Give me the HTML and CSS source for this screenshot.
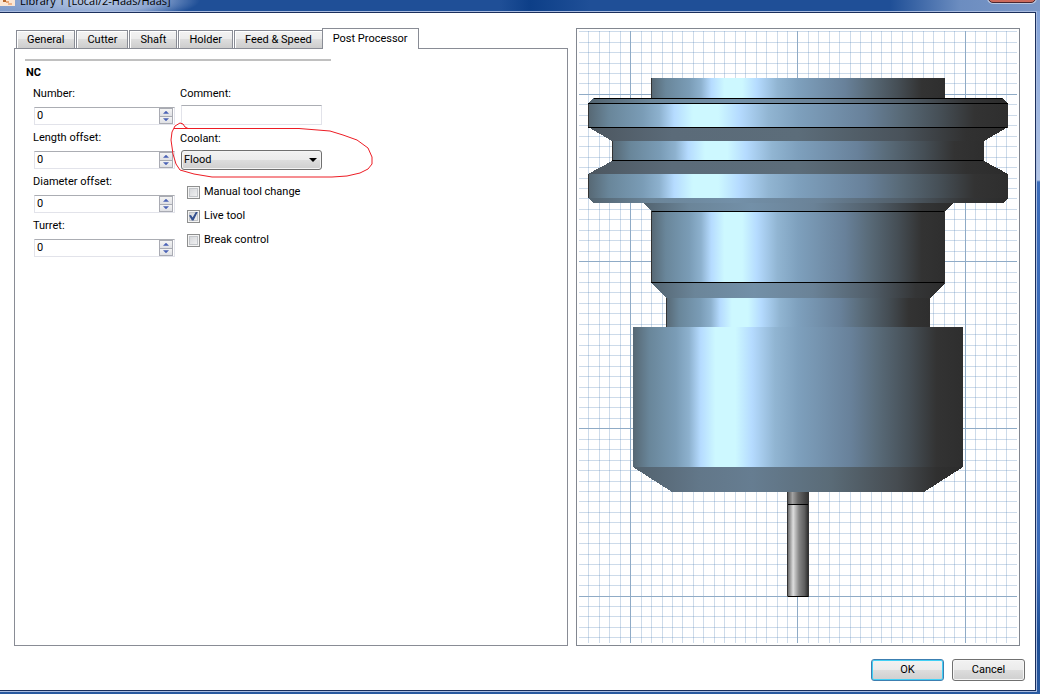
FILE: index.html
```html
<!DOCTYPE html>
<html lang="en">
<head>
  <meta charset="UTF-8" />
  <meta name="viewport" content="width=device-width, initial-scale=1.0" />
  <title>Library</title>
  <link rel="stylesheet" href="styles.css">
</head>
<body>
  <header class="titlebar">
    <svg class="app-icon" width="15" height="15" viewBox="0 0 15 15" aria-hidden="true">
      <rect width="15" height="15" fill="#fbe6d4"/>
      <path d="M3 7h3v4H3z" fill="#b5662c"/>
      <path d="M6 10h3v2H6z" fill="#e8a878"/>
      <path d="M8 12h4v2H8z" fill="#eeb58c"/>
      <path d="M10 7h3v2h-3z" fill="#fff"/>
    </svg>
    <span class="title">Library 1 [Local/2-Haas/Haas]</span>
    <button class="close" aria-label="Close"></button>
  </header>

  <div class="window">
    <main class="content">
      <section class="editor">
        <div class="tabs" role="tablist">
          <button class="tab" role="tab">General</button>
          <button class="tab" role="tab">Cutter</button>
          <button class="tab" role="tab">Shaft</button>
          <button class="tab" role="tab">Holder</button>
          <button class="tab" role="tab">Feed &amp; Speed</button>
          <button class="tab active" role="tab" aria-selected="true">Post Processor</button>
        </div>

        <div class="panel" role="tabpanel">
          <hr class="rule">
          <h2>NC</h2>
          <form class="fields">
            <div class="col col-numbers">
              <div class="field">
                <label for="number">Number:</label>
                <div class="spinner">
                  <input type="number" id="number" value="0">
                  <div class="arrows">
                    <button type="button" class="up" aria-label="Increase number"></button>
                    <button type="button" class="down" aria-label="Decrease number"></button>
                  </div>
                </div>
              </div>
              <div class="field">
                <label for="lengthOffset">Length offset:</label>
                <div class="spinner">
                  <input type="number" id="lengthOffset" value="0">
                  <div class="arrows">
                    <button type="button" class="up" aria-label="Increase length offset"></button>
                    <button type="button" class="down" aria-label="Decrease length offset"></button>
                  </div>
                </div>
              </div>
              <div class="field">
                <label for="diameterOffset">Diameter offset:</label>
                <div class="spinner">
                  <input type="number" id="diameterOffset" value="0">
                  <div class="arrows">
                    <button type="button" class="up" aria-label="Increase diameter offset"></button>
                    <button type="button" class="down" aria-label="Decrease diameter offset"></button>
                  </div>
                </div>
              </div>
              <div class="field">
                <label for="turret">Turret:</label>
                <div class="spinner">
                  <input type="number" id="turret" value="0">
                  <div class="arrows">
                    <button type="button" class="up" aria-label="Increase turret"></button>
                    <button type="button" class="down" aria-label="Decrease turret"></button>
                  </div>
                </div>
              </div>
            </div>

            <div class="col col-options">
              <div class="field">
                <label for="comment">Comment:</label>
                <input type="text" class="text" id="comment">
              </div>
              <div class="field marked">
                <label for="coolant">Coolant:</label>
                <select id="coolant">
                  <option>Flood</option>
                </select>
                <svg class="marker" width="206" height="60" viewBox="0 0 206 60" aria-hidden="true">
                  <path d="M4 8.500H129L160 11L173 15L187 20L198 28L202 37V44L198 49L190 53L177 56L162 57H42L24 54L10 50L6 44L3 34L1 20L2 12L5 6L10 3L13 4L15 7L18 8.500"/>
                </svg>
              </div>
              <div class="checks">
                <label><input type="checkbox"> Manual tool change</label>
                <label><input type="checkbox" checked> Live tool</label>
                <label><input type="checkbox"> Break control</label>
              </div>
            </div>
          </form>
        </div>
      </section>

      <section class="preview">
        <svg viewBox="0 0 442 616" role="img" aria-label="Tool preview">
          <defs>
            <linearGradient id="steel">
              <stop offset="0" stop-color="#566773"/>
              <stop offset="0.05" stop-color="#69869a"/>
              <stop offset="0.13" stop-color="#7a9cb6"/>
              <stop offset="0.17" stop-color="#8db1ce"/>
              <stop offset="0.205" stop-color="#b5dbff"/>
              <stop offset="0.25" stop-color="#cdf8ff"/>
              <stop offset="0.31" stop-color="#cdf8ff"/>
              <stop offset="0.36" stop-color="#b5dbff"/>
              <stop offset="0.43" stop-color="#91b5d2"/>
              <stop offset="0.5" stop-color="#7ea0bd"/>
              <stop offset="0.66" stop-color="#68819a"/>
              <stop offset="0.74" stop-color="#596b79"/>
              <stop offset="0.84" stop-color="#454e55"/>
              <stop offset="0.92" stop-color="#333333"/>
              <stop offset="1" stop-color="#2e2e2e"/>
            </linearGradient>
            <linearGradient id="cone">
              <stop offset="0" stop-color="#52616d"/>
              <stop offset="0.2" stop-color="#627789"/>
              <stop offset="0.36" stop-color="#667d91"/>
              <stop offset="0.6" stop-color="#5a6b77"/>
              <stop offset="0.8" stop-color="#464c51"/>
              <stop offset="0.92" stop-color="#303030"/>
              <stop offset="1" stop-color="#2c2c2c"/>
            </linearGradient>
            <linearGradient id="groove">
              <stop offset="0" stop-color="#4c565f"/>
              <stop offset="0.2" stop-color="#5b6b79"/>
              <stop offset="0.5" stop-color="#5c6d7a"/>
              <stop offset="0.75" stop-color="#49525a"/>
              <stop offset="0.9" stop-color="#313131"/>
              <stop offset="1" stop-color="#2c2c2c"/>
            </linearGradient>
            <linearGradient id="chamfer">
              <stop offset="0" stop-color="#52636f"/>
              <stop offset="0.15" stop-color="#6b8599"/>
              <stop offset="0.35" stop-color="#7390a8"/>
              <stop offset="0.55" stop-color="#6a8297"/>
              <stop offset="0.75" stop-color="#505d68"/>
              <stop offset="0.9" stop-color="#343536"/>
              <stop offset="1" stop-color="#2c2c2c"/>
            </linearGradient>
            <linearGradient id="shank">
              <stop offset="0" stop-color="#454545"/>
              <stop offset="0.25" stop-color="#a2a2a2"/>
              <stop offset="0.5" stop-color="#676767"/>
              <stop offset="1" stop-color="#303030"/>
            </linearGradient>
            <linearGradient id="flute">
              <stop offset="0" stop-color="#555"/>
              <stop offset="0.28" stop-color="#dedede"/>
              <stop offset="0.55" stop-color="#858585"/>
              <stop offset="0.8" stop-color="#5e5e5e"/>
              <stop offset="1" stop-color="#222"/>
            </linearGradient>
          </defs>

          <path id="minor" class="minor"/>
          <path id="major" class="major"/>

          <!-- holder, top to bottom -->
          <g shape-rendering="crispEdges">
            <rect x="74" y="49" width="294" height="21" fill="url(#steel)"/>
            <path d="M16 69H426L431 75H11Z" fill="url(#chamfer)"/>
            <rect x="11" y="75" width="420" height="24" fill="url(#steel)"/>
            <path d="M11 98H431L407 112H35Z" fill="url(#groove)"/>
            <rect x="35" y="112" width="372" height="20" fill="url(#steel)"/>
            <path d="M35 132H407L431 145H11Z" fill="url(#groove)"/>
            <rect x="11" y="145" width="420" height="24" fill="url(#steel)"/>
            <path d="M11 169H431L426 174H16Z" fill="url(#chamfer)"/>
            <path d="M66 174H376L368 182H74Z" fill="url(#chamfer)"/>
            <rect x="74" y="182" width="294" height="72" fill="url(#steel)"/>
            <path d="M74 254H368L353 269H89Z" fill="url(#chamfer)"/>
            <rect x="89" y="269" width="264" height="29" fill="url(#steel)"/>
            <rect x="56" y="298" width="330" height="140" fill="url(#steel)"/>
            <path d="M56 438H386L347 463H95Z" fill="url(#cone)"/>
            <rect x="210" y="463" width="22" height="12" fill="url(#shank)"/>
            <rect x="210" y="475" width="22" height="93" fill="url(#flute)"/>
          </g>
          <path class="edge" d="M17 69.500H425M11 74.500H431M11 98.500H430M35 131.500H406M74 182.500H367M74 253.500H367M211 475.500H231M211 567.500H231"/>
          <path class="side" d="M74.500 49V69M11.500 75V98M35.500 112V131M11.500 145V169M74.500 182V253M89.500 269V298M210.500 463V567M231.500 463V567"/>
        </svg>
      </section>
    </main>

    <footer class="buttons">
      <button class="btn default">OK</button>
      <button class="btn">Cancel</button>
    </footer>
  </div>

  <script>
    // grid: 16 minor cells per major cell
    const major = 167.2;
    const step = major / 16;
    const originX = 220.4;
    const originY = 567;
    const box = { left: 2, top: 2, right: 440, bottom: 614 };
    const paths = { minor: "", major: "" };

    for (let i = -64; i <= 64; i++) {
      const name = i % 16 === 0 ? "major" : "minor";
      const x = Math.round(originX + i * step);
      const y = Math.floor(originY + i * step);
      if (x >= box.left && x < box.right) {
        paths[name] += `M${x + 0.5} ${box.top}V${box.bottom}`;
      }
      if (y >= box.top && y < box.bottom) {
        paths[name] += `M${box.left} ${y + 0.5}H${box.right}`;
      }
    }
    document.getElementById("minor").setAttribute("d", paths.minor);
    document.getElementById("major").setAttribute("d", paths.major);

    document.querySelectorAll(".spinner").forEach(spinner => {
      const input = spinner.querySelector("input");
      spinner.querySelector(".up").addEventListener("click", () => input.stepUp());
      spinner.querySelector(".down").addEventListener("click", () => input.stepDown());
    });
  </script>
</body>
</html>
```
FILE: styles.css
```css
* {
  box-sizing: border-box;
}
body {
  margin: 0;
  min-height: 100vh;
  padding: 0 3px 2px 0;
  display: flex;
  flex-direction: column;
  font-family: Roboto, "Liberation Sans", sans-serif;
  font-size: 11px;
  line-height: 14px;
  color: #000;
  background: linear-gradient(#7f9fd6, #b4c6e6 180px, #3b6cba 182px, #3b6cba 560px, #1d4d94 640px, #2a5aa0);
}
button, input, select {
  font: inherit;
  color: inherit;
  margin: 0;
}
.titlebar {
  height: 11px;
  margin-right: -3px;
  padding-right: 4px;
  display: flex;
  align-items: flex-end;
  gap: 5px;
  overflow: hidden;
  background:
    radial-gradient(ellipse 110px 22px at 90px 0, #b9c9e4, #8ea7d2 60%, transparent),
    linear-gradient(90deg, #7f9bcb, #1f4f97 180px, #1f4f97 500px, #0d3f88 530px, #1f4f97 590px, #1f4f97 890px, #6c8dc0 960px, #7c98c8);
}
.app-icon {
  flex: none;
  margin-bottom: 5px;
}
.title {
  flex: 1;
  margin-bottom: 3px;
  font-family: "Open Sans", sans-serif;
  font-size: 11px;
  white-space: nowrap;
}
.close {
  width: 48px;
  height: 18px;
  margin-bottom: 8px;
  border: 1px solid #4a2630;
  border-radius: 0 0 5px 5px;
  background: #cc6a5c;
  box-shadow: 0 0 0 1px #b9c6df;
}
.window {
  flex: 1;
  display: flex;
  flex-direction: column;
  background: #fff;
  border: 1px solid #1b2f5c;
  border-left: 0;
  box-shadow: 0 0 0 1px #a9bbdf;
  margin: 1px 1px 1px 0;
}
.content {
  display: grid;
  grid-template-columns: 554fr 444fr;
  gap: 8px;
  padding: 15px 15px 13px 14px;
}
.editor {
  display: flex;
  flex-direction: column;
}
.tabs {
  display: flex;
  align-items: flex-end;
  gap: 1px;
  padding-left: 2px;
}
.tab {
  height: 18px;
  padding: 0 10px;
  border: 1px solid #898c95;
  border-bottom: 0;
  box-shadow: inset 1px 1px #fff;
  background: linear-gradient(#f3f3f3, #ebebeb 50%, #dddddd 50%, #cdcdcd);
  white-space: nowrap;
}
.tab.active {
  position: relative;
  height: 21px;
  margin-bottom: -1px;
  margin-left: -2px;
  background: #fff;
}
.panel {
  flex: 1;
  padding: 10px;
  border: 1px solid #898c95;
}
.rule {
  width: 306px;
  height: 2px;
  margin: 0;
  border: 0;
  background: #c0c0c0;
}
h2 {
  margin: 5px 0 7px 1px;
  font-size: 11px;
  line-height: 14px;
}
.fields {
  display: flex;
  gap: 6px;
  padding-left: 9px;
}
.col {
  width: 141px;
  display: flex;
  flex-direction: column;
}
.col-numbers {
  gap: 6px;
}
.col-options {
  gap: 7px;
}
.field {
  display: flex;
  flex-direction: column;
}
.field label {
  margin-left: -1px;
}
.col-numbers .field {
  gap: 6px;
}
.col-options .field {
  gap: 4px;
}
.spinner {
  display: flex;
  height: 18px;
  padding-right: 1px;
  border: 1px solid #e2e3ea;
  border-top-color: #abadb3;
}
.spinner input {
  flex: 1;
  min-width: 0;
  padding: 0 2px;
  border: 0;
  outline: 0;
  background: none;
  appearance: textfield;
}
.spinner input::-webkit-inner-spin-button {
  appearance: none;
}
.arrows {
  width: 14px;
  display: flex;
  flex-direction: column;
}
.arrows button {
  flex: 1;
  display: flex;
  align-items: center;
  justify-content: center;
  padding: 0;
  border: 1px solid #a9abb3;
  background: linear-gradient(#f4f4f4, #dfe0e4);
}
.arrows .down {
  border-top: 0;
}
.arrows button::before {
  content: "";
  width: 6px;
  height: 3px;
  background: #4a62b5;
  clip-path: polygon(50% 0, 100% 100%, 0 100%);
}
.arrows .down::before {
  clip-path: polygon(0 0, 100% 0, 50% 100%);
}
.text {
  height: 20px;
  padding: 0 2px;
  border: 1px solid #e2e3ea;
  border-top-color: #abadb3;
}
select {
  height: 20px;
  padding: 0 2px;
  border: 1px solid #707070;
  border-radius: 3px;
  appearance: none;
  background: linear-gradient(#f2f2f2, #ebebeb 50%, #dddddd 50%, #cfcfcf);
  box-shadow: inset 0 0 0 1px #f4f4f4;
}
.marked {
  position: relative;
}
.marked::after {
  content: "";
  position: absolute;
  right: 5px;
  bottom: 8px;
  width: 8px;
  height: 4px;
  background: #000;
  clip-path: polygon(0 0, 100% 0, 50% 100%);
  pointer-events: none;
}
/* red pen loop around the coolant choice */
.marker {
  position: absolute;
  left: -11px;
  top: -12px;
  fill: none;
  stroke: #ed1c24;
  pointer-events: none;
}
.checks {
  display: flex;
  flex-direction: column;
  gap: 10px;
  padding: 8px 0 0 6px;
}
.checks label {
  display: flex;
  align-items: center;
  gap: 4px;
  white-space: nowrap;
}
.checks input {
  width: 13px;
  height: 13px;
  display: grid;
  place-items: center;
  appearance: none;
  border: 1px solid #8e8f8f;
  background: linear-gradient(135deg, #cfd1d5, #f6f6f6);
  box-shadow: inset 0 0 0 1px #f4f4f4, inset 0 0 0 2px #c3c6ca;
}
.checks input:checked::before {
  content: "";
  width: 9px;
  height: 9px;
  background: #34508f;
  clip-path: polygon(0 45%, 22% 40%, 40% 68%, 78% 0, 100% 0, 50% 100%, 32% 100%);
}
.preview {
  border: 1px solid #828790;
}
.preview svg {
  display: block;
  width: 100%;
}
.minor {
  stroke: #4a7fb5;
  stroke-opacity: 0.28;
}
.major {
  stroke: #8fabc6;
}
.edge {
  stroke: #000;
}
.side {
  stroke: #333;
}
.buttons {
  display: flex;
  justify-content: flex-end;
  gap: 8px;
  padding: 0 10px 9px;
}
.btn {
  width: 73px;
  height: 22px;
  padding: 0;
  border: 1px solid #707070;
  border-radius: 3px;
  background: linear-gradient(#f2f2f2, #ebebeb 50%, #dddddd 50%, #cfcfcf);
  box-shadow: inset 0 0 0 1px #f6f6f6;
}
.btn.default {
  border-color: #3c7fb1;
  box-shadow: inset 0 0 0 1px #42d0f5;
}
```
